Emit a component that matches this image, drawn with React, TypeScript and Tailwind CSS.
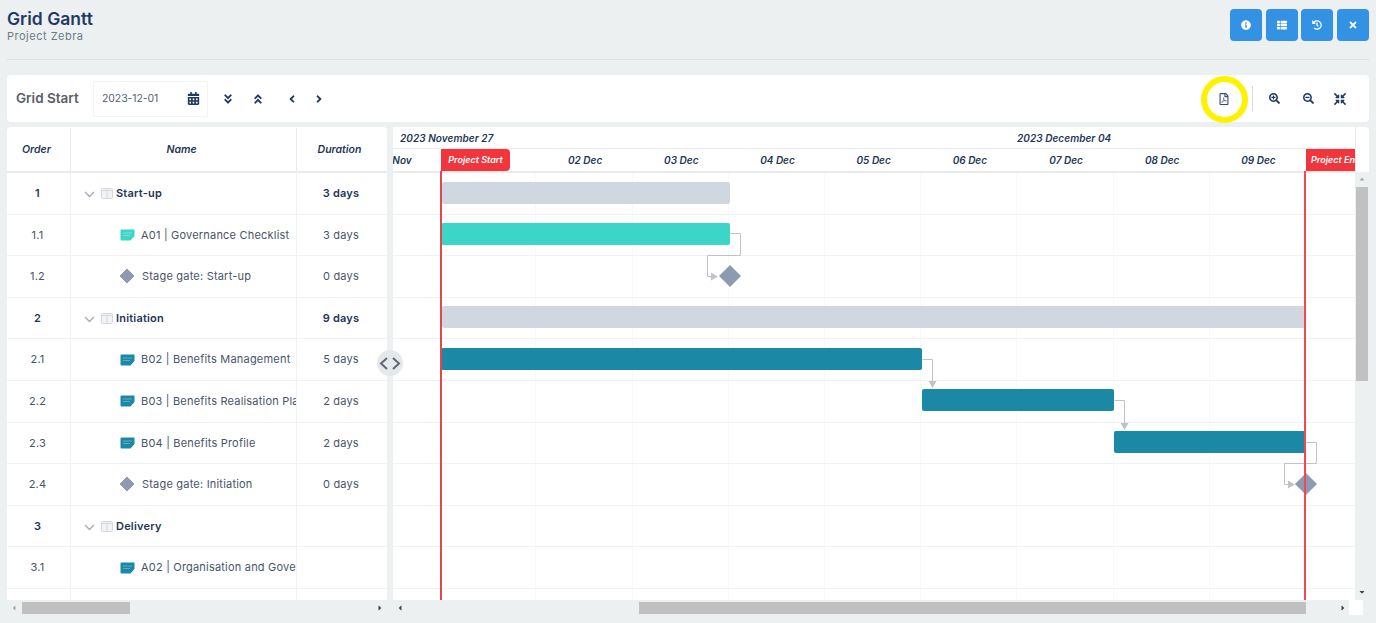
import React from "react";
import {
  FaInfoCircle, FaThList, FaHistory, FaTimes, FaCalendarAlt, FaAngleDoubleDown, FaAngleDoubleUp,
  FaAngleLeft, FaAngleRight, FaSearchPlus, FaSearchMinus, FaCompressArrowsAlt, FaRegFilePdf,
  FaCaretLeft, FaCaretRight, FaCaretUp, FaCaretDown,
} from "react-icons/fa";

type Row = { o: string; name: string; dur: string; kind: "group" | "task" | "gate"; color?: string };
const rows: Row[] = [
  { o: "1", name: "Start-up", dur: "3 days", kind: "group" },
  { o: "1.1", name: "A01 | Governance Checklist", dur: "3 days", kind: "task", color: "#3bd6c8" },
  { o: "1.2", name: "Stage gate: Start-up", dur: "0 days", kind: "gate" },
  { o: "2", name: "Initiation", dur: "9 days", kind: "group" },
  { o: "2.1", name: "B02 | Benefits Management", dur: "5 days", kind: "task", color: "#1b89a6" },
  { o: "2.2", name: "B03 | Benefits Realisation Plan", dur: "2 days", kind: "task", color: "#1b89a6" },
  { o: "2.3", name: "B04 | Benefits Profile", dur: "2 days", kind: "task", color: "#1b89a6" },
  { o: "2.4", name: "Stage gate: Initiation", dur: "0 days", kind: "gate" },
  { o: "3", name: "Delivery", dur: "", kind: "group" },
  { o: "3.1", name: "A02 | Organisation and Governance", dur: "", kind: "task", color: "#1b89a6" },
  { o: "", name: "", dur: "", kind: "task" },
];

const days = ["Nov", "", "02 Dec", "03 Dec", "04 Dec", "05 Dec", "06 Dec", "07 Dec", "08 Dec", "09 Dec", ""];

function TaskIcon({ color }: { color: string }) {
  return (
    <svg width="15" height="12" viewBox="0 0 15 12" className="shrink-0">
      <path d="M1.5 0.5H14.5V7L10.5 11.5H1.5A1 1 0 0 1 0.5 10.5V1.5A1 1 0 0 1 1.5 0.5Z" fill={color} />
      <path d="M3 4H12M3 6.5H10" stroke="#ffffff" strokeOpacity="0.3" strokeWidth="1" />
    </svg>
  );
}

function GateIcon() {
  return (
    <svg width="16" height="16" viewBox="0 0 16 16" className="shrink-0">
      <path d="M8 1L15 8L8 15L1 8Z" fill="#8e9ab2" stroke="#8e9ab2" strokeLinejoin="round" />
    </svg>
  );
}

function GroupIcon() {
  return (
    <svg width="12" height="11" viewBox="0 0 12 11" className="shrink-0">
      <rect x="0.5" y="0.5" width="11" height="10" rx="1" fill="#f1f3f5" stroke="#d3d8df" />
      <path d="M0.5 2.5H11.5M6 2.5V10.5" stroke="#d3d8df" fill="none" />
    </svg>
  );
}

function Chevron() {
  return (
    <svg width="11" height="7" viewBox="0 0 11 7" fill="none" stroke="#a3aab4" strokeWidth="1.3" className="shrink-0">
      <path d="M1 1L5.5 5.5L10 1" />
    </svg>
  );
}

function Bar({ left, top, width, color }: { left: number; top: number; width: number; color: string }) {
  return <div className="absolute h-[22px] rounded-[2px]" style={{ left, top, width, background: color }} />;
}

function Diamond({ left, top }: { left: number; top: number }) {
  return (
    <svg className="absolute" width="24" height="24" viewBox="0 0 24 24" style={{ left, top }}>
      <path d="M12 1L23 12L12 23L1 12Z" fill="#8e9ab2" />
    </svg>
  );
}

export default function App() {
  return (
    <div
      className="relative h-[623px] w-[1376px] overflow-hidden bg-[#ecf0f1] px-[7px] text-[#1f3658]"
      style={{ fontFamily: '"Inter", "Noto Sans", "Liberation Sans", sans-serif' }}
    >
      <header className="flex h-[60px] items-start justify-between border-b border-[#dde1e4] pt-[9px]">
        <div>
          <h1 className="text-[17.5px] leading-[19px] font-semibold text-[#1f3a64]">Grid Gantt</h1>
          <p className="mt-[1px] text-[11px] leading-[15px] tracking-[0.5px] text-[#6f7a88]">Project Zebra</p>
        </div>
        <div className="flex gap-[3.67px] text-white">
          {[<FaInfoCircle />, <FaThList />, <FaHistory />, <FaTimes />].map((ic, i) => (
            <button key={i} className="flex h-[32px] w-[32px] items-center justify-center rounded-[4px] bg-[#3492e5] text-[10px]">
              {ic}
            </button>
          ))}
        </div>
      </header>

      <div className="mt-[15px] flex h-[47px] items-center rounded-[4px] bg-white pr-[23px] pl-[9px]">
        <span className="w-[64px] text-[13.5px] font-semibold whitespace-nowrap text-[#5a6068]">Grid Start</span>
        <div className="ml-[13px] flex h-[36px] w-[115px] items-center justify-between border border-[#f3f4f6] pr-[7px] pl-[8px]">
          <span className="text-[10.5px] tracking-[-0.1px] text-[#566275]">2023-12-01</span>
          <FaCalendarAlt className="text-[13px] text-[#1f3a64]" />
        </div>
        <div className="ml-[14px] flex items-center text-[#1f3a64]">
          <FaAngleDoubleDown className="text-[12px]" />
          <FaAngleDoubleUp className="ml-[18px] text-[12px]" />
          <FaAngleLeft className="ml-[22px] text-[12px]" />
          <FaAngleRight className="ml-[15px] text-[12px]" />
        </div>
        <div className="ml-auto flex items-center text-[#1f3a64]">
          <FaRegFilePdf className="text-[12px] text-[#3c4f72]" />
          <div className="mr-[16px] ml-[22px] h-[25px] w-px bg-[#d9dde1]" />
          <FaSearchPlus className="text-[11px]" />
          <FaSearchMinus className="ml-[22.5px] text-[11px]" />
          <FaCompressArrowsAlt className="ml-[20.5px] text-[12px]" />
        </div>
      </div>

      <div className="mt-[5px] flex h-[488px] flex-col">
        <div className="flex h-[473px]">
          {/* left grid */}
          <div className="h-full w-[380px] shrink-0 overflow-hidden rounded-t-[4px] bg-white">
            <div className="flex h-[46px] border-b-2 border-[#e8eaed] pt-[1px] text-[10.5px] font-semibold italic">
              <div className="flex w-[64px] items-center justify-center border-r border-[#e8ebee] pr-[4px]">Order</div>
              <div className="flex w-[226px] items-center justify-center border-r border-[#e8ebee] pr-[4px]">Name</div>
              <div className="flex w-[90px] items-center justify-center pr-[5px]">Duration</div>
            </div>
            {rows.map((r, i) => (
              <div key={i} className={`flex h-[41.6px] border-b border-[#f0f2f4] text-[11px] tracking-[0.2px] ${r.kind === "group" ? "font-semibold text-[#1f3658]" : "text-[#475569]"}`}>
                <div className="flex w-[64px] shrink-0 items-center justify-center border-r border-[#f0f2f4] pr-[2px]">{r.o}</div>
                <div className="flex w-[226px] shrink-0 items-center overflow-hidden border-r border-[#f0f2f4] whitespace-nowrap">
                  {r.kind === "group" && (
                    <>
                      <span className="ml-[13px] pt-[2px]"><Chevron /></span>
                      <span className="ml-[6px]"><GroupIcon /></span>
                      <span className="ml-[3px]">{r.name}</span>
                    </>
                  )}
                  {r.kind === "task" && r.color && (
                    <>
                      <span className="ml-[49px]"><TaskIcon color={r.color} /></span>
                      <span className="ml-[6px]">{r.name}</span>
                    </>
                  )}
                  {r.kind === "gate" && (
                    <>
                      <span className="ml-[48px]"><GateIcon /></span>
                      <span className="ml-[7px]">{r.name}</span>
                    </>
                  )}
                </div>
                <div className="flex w-[90px] shrink-0 items-center justify-center pr-[2px]">{r.dur}</div>
              </div>
            ))}
          </div>

          {/* splitter */}
          <div className="relative h-full w-[6px] shrink-0 bg-[#ecf0f1]">
            <div className="absolute top-[223px] left-[-10px] z-10 flex h-[26px] w-[26px] items-center justify-center rounded-full bg-[#e6e9ec]">
              <svg width="22" height="13" viewBox="0 0 22 13" fill="none" stroke="#5f6874" strokeWidth="2">
                <path d="M8 1L2 6.5L8 12M14 1L20 6.5L14 12" />
              </svg>
            </div>
          </div>

          {/* chart */}
          <div className="relative h-full w-[962px] shrink-0 overflow-hidden bg-white">
            <div className="flex h-[22px] items-center border-b border-[#e8eaed] pt-[2px] text-[10px] font-semibold tracking-[0.05px] italic">
              <span className="ml-[7px] w-[617px]">2023 November 27</span>
              <span>2023 December 04</span>
            </div>
            <div className="flex h-[24px] border-b-2 border-[#e8eaed] text-[10px] font-semibold italic">
              {days.map((d, i) => (
                <div key={i} className={`flex shrink-0 items-center justify-center ${i === 0 ? "w-[18px]" : i === 1 ? "w-[126px]" : "w-[96.2px]"}`}>{d}</div>
              ))}
            </div>
            <div className="absolute top-[22px] left-[48px] z-10 flex h-[22px] w-[69px] items-center justify-center rounded-tr-[4px] rounded-br-[4px] bg-[#f2353c] text-[9px] font-semibold text-white italic">
              Project Start
            </div>
            <div className="absolute top-[22px] left-[913px] z-10 flex h-[22px] w-[49px] items-center overflow-hidden bg-[#f2353c] pl-[5px] text-[9px] font-semibold whitespace-nowrap text-white italic">
              Project End
            </div>
            {rows.map((_, i) => (
              <div key={i} className="flex h-[41.6px] border-b border-[#f0f2f4]">
                <div className="h-full w-[143.4px] shrink-0 border-r border-[#f8f9fa]" />
                {Array.from({ length: 9 }).map((_, k) => (
                  <div key={k} className="h-full w-[96.2px] shrink-0 border-r border-[#f8f9fa]" />
                ))}
              </div>
            ))}
            {/* overlay: bars positioned on the time axis */}
            <Bar left={49} top={55} width={288} color="#d1d7e0" />
            <Bar left={48} top={96} width={289} color="#3bd6c8" />
            <Bar left={49} top={179} width={863} color="#d1d7e0" />
            <Bar left={48} top={221} width={481} color="#1b89a6" />
            <Bar left={529} top={262} width={192} color="#1b89a6" />
            <Bar left={721} top={304} width={192} color="#1b89a6" />
            <svg className="absolute top-0 left-0" width="962" height="473" fill="none">
              <g stroke="#bfc3c8" strokeWidth="1">
                <path d="M337.5 106.5H347.5V128.5H314.5V149.5H320" />
                <path d="M529.5 232.5H539.5V256" />
                <path d="M721.5 273.5H731.5V298" />
                <path d="M913.5 315.5H923.5V336.5H891.5V357.5H897" />
              </g>
              <g fill="#bfc3c8">
                <path d="M318 145.5L325 149.5L318 153.5Z" />
                <path d="M535.5 254L539.5 261L543.5 254Z" />
                <path d="M727.5 296L731.5 303L735.5 296Z" />
                <path d="M895 353.5L902 357.5L895 361.5Z" />
              </g>
            </svg>
            <Diamond left={325} top={137} />
            <Diamond left={901} top={345} />
            <div className="absolute top-[44px] bottom-0 left-[47px] w-[2px] bg-[#e2474d]" />
            <div className="absolute top-[44px] bottom-0 left-[911px] w-[2px] bg-[#f0494f]" />
          </div>

          {/* vertical scrollbar */}
          <div className="flex w-[14px] shrink-0 flex-col items-center text-[8px] text-[#555]">
            <div className="h-[45px] w-full shrink-0 rounded-tr-[4px] border-l border-[#e8eaed] bg-white" />
            <FaCaretUp className="mt-[3px] text-[#a9a9a9]" />
            <div className="mt-[4px] h-[194px] w-[12px] bg-[#c1c1c1]" />
            <FaCaretDown className="mt-auto mb-[4px] text-[#444]" />
          </div>
        </div>

        {/* horizontal scrollbars */}
        <div className="flex h-[15px] text-[8px]">
          <div className="flex w-[380px] items-center">
            <FaCaretLeft className="ml-[3px] text-[#a9a9a9]" />
            <div className="ml-[4px] h-[12px] w-[108px] bg-[#c1c1c1]" />
            <FaCaretRight className="mr-[3px] ml-auto text-[#444]" />
          </div>
          <div className="flex w-[962px] items-center pl-[6px]">
            <FaCaretLeft className="ml-[3px] text-[#444]" />
            <div className="ml-[235px] h-[12px] w-[667px] bg-[#c1c1c1]" />
            <FaCaretRight className="mr-[2px] ml-auto text-[#444]" />
          </div>
          <div className="h-[15px] w-[14px] bg-white" />
        </div>
      </div>

      {/* highlight ring drawn over the toolbar */}
      <div className="absolute top-[76px] left-[1201px] h-[47px] w-[47px] rounded-full border-[6px] border-[#fff200]" />
    </div>
  );
}
